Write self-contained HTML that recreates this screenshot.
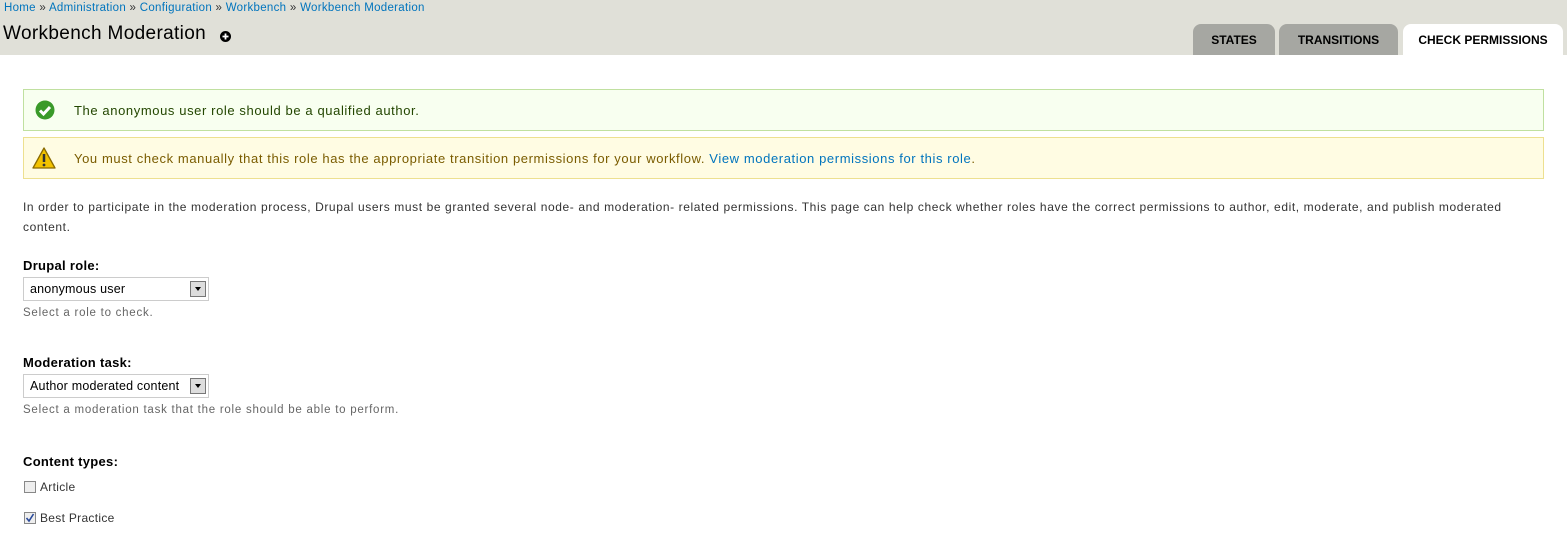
<!DOCTYPE html>
<html><head><style>
body{margin:0;width:1567px;height:533px;overflow:hidden;background:#fff;font-family:"Liberation Sans",sans-serif;color:#333;font-size:13px;}
a{color:#0074bd;text-decoration:none}
#hdr{position:absolute;left:0;top:0;width:1567px;height:55px;background:#e0e0d8;}
.bc{position:absolute;left:4px;top:2px;font-size:11.5px;color:#333;letter-spacing:0.3px}
h1{position:absolute;left:3px;top:23px;margin:0;font-weight:normal;font-size:19px;color:#000;letter-spacing:0.35px}
.tab{position:absolute;top:24px;height:31px;border-radius:8px 8px 0 0;background:#a6a7a2;font-weight:bold;font-size:12px;color:#000;text-align:center;line-height:32px}
.msg{position:absolute;left:23px;width:1521px;box-sizing:border-box;border:1px solid;letter-spacing:0.6px}
.ok{top:89px;height:42px;background:#f8fff0;border-color:#c0e0a0;color:#234600}
.warn{top:137px;height:42px;background:#fffce3;border-color:#ede090;color:#7a5c00}
.msg span.t{position:absolute;left:50px;top:13px;white-space:nowrap}
p{position:absolute;left:23px;margin:0;font-size:12px;line-height:20px;width:1490px;letter-spacing:0.6px}
label{position:absolute;left:23px;font-weight:bold;font-size:13px;color:#000;letter-spacing:0.3px}
.sel{position:absolute;left:23px;width:186px;height:24px;box-sizing:border-box;border:1px solid #ccc;background:#fff}
.sel span{position:absolute;left:6px;top:4px;color:#000;font-size:12.5px;letter-spacing:0.2px}
.sel i{position:absolute;right:2px;top:3px;width:16px;height:16px;border:1px solid #777;background:#ddd;box-sizing:border-box}
.sel i:after{content:"";position:absolute;left:4px;top:5px;border-left:3px solid transparent;border-right:3px solid transparent;border-top:4px solid #000}
.d{position:absolute;left:23px;font-size:11.5px;color:#666;letter-spacing:0.75px}
.cb{position:absolute;left:24px;width:12px;height:12px;border:1px solid #888;background:#eee;box-sizing:border-box}
.cl{position:absolute;left:40px;font-size:12px;color:#333;letter-spacing:0.3px}
</style></head><body>
<div id="hdr">
<div class="bc"><a>Home</a> » <a>Administration</a> » <a>Configuration</a> » <a>Workbench</a> » <a>Workbench Moderation</a></div>
<h1>Workbench Moderation</h1>
<svg style="position:absolute;left:220px;top:31px" width="11" height="11"><circle cx="5.5" cy="5.5" r="5.5" fill="#000"/><path d="M5.5 2.5v6M2.5 5.5h6" stroke="#fff" stroke-width="1.8"/></svg>
<div class="tab" style="left:1193px;width:82px">STATES</div>
<div class="tab" style="left:1279px;width:119px">TRANSITIONS</div>
<div class="tab" style="left:1403px;width:160px;background:#fff">CHECK PERMISSIONS</div>
</div>
<div class="msg ok"><svg style="position:absolute;left:11px;top:10px" width="20" height="20"><circle cx="10" cy="10" r="9.5" fill="#3a9a2a"/><path d="M5 10.5l3.5 3.5 6.5-7" stroke="#fff" stroke-width="3" fill="none"/></svg><span class="t">The anonymous user role should be a qualified author.</span></div>
<div class="msg warn"><svg style="position:absolute;left:8px;top:9px" width="24" height="22"><path d="M12 1L23 21H1Z" fill="#f2c200" stroke="#8a6a00" stroke-width="1.3" stroke-linejoin="round"/><path d="M12 7v8" stroke="#333" stroke-width="2.5"/><circle cx="12" cy="18" r="1.4" fill="#333"/></svg><span class="t">You must check manually that this role has the appropriate transition permissions for your workflow. <a>View moderation permissions for this role</a>.</span></div>
<p style="top:197px">In order to participate in the moderation process, Drupal users must be granted several node- and moderation- related permissions. This page can help check whether roles have the correct permissions to author, edit, moderate, and publish moderated content.</p>
<label style="top:258px">Drupal role:</label>
<div class="sel" style="top:277px"><span>anonymous user</span><i></i></div>
<div class="d" style="top:307px">Select a role to check.</div>
<label style="top:355px">Moderation task:</label>
<div class="sel" style="top:374px"><span>Author moderated content</span><i></i></div>
<div class="d" style="top:404px">Select a moderation task that the role should be able to perform.</div>
<label style="top:454px">Content types:</label>
<div class="cb" style="top:481px"></div><div class="cl" style="top:480px">Article</div>
<div class="cb" style="top:512px"><svg width="10" height="10" style="position:absolute;left:0;top:0"><path d="M1.5 5l2.5 3 4.5-7" stroke="#2a4a9a" stroke-width="1.6" fill="none"/></svg></div><div class="cl" style="top:511px">Best Practice</div>
</body></html>
